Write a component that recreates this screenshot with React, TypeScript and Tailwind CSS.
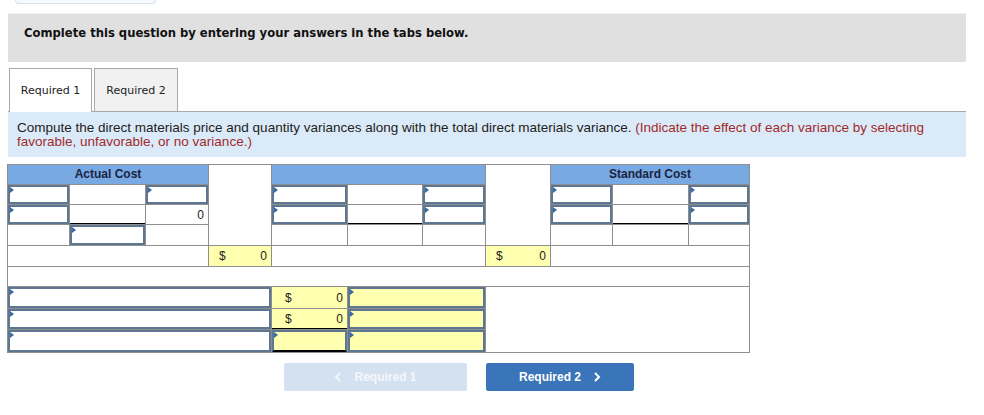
import React from "react";

const Tri = () => (
  <span className="absolute left-0 top-0 h-0 w-0 border-y-[3px] border-l-[4px] border-y-transparent border-l-[#3b6aa6]" />
);

const Inp = ({ yellow = false, extra = "" }: { yellow?: boolean; extra?: string }) => (
  <div className={`relative h-full w-full border-2 border-[#5d7792] ${yellow ? "bg-[#ffffb0]" : "bg-white"} ${extra}`}>
    <Tri />
  </div>
);

const W = ({ cls = "" }: { cls?: string }) => <div className={`bg-white ${cls}`} />;

const Money = ({ cls = "" }: { cls?: string }) => (
  <div className={`flex items-center justify-between bg-[#ffffb0] pr-[4px] text-[12px] text-[#222] ${cls}`}>
    <span>$</span>
    <span>0</span>
  </div>
);

export default function App() {
  return (
    <div className="min-h-[415px] w-[984px] bg-white font-['DejaVu_Sans',sans-serif] text-[#222]">
      <div className="ml-[15px] h-[4px] w-[141px] rounded-b-[4px] border border-t-0 border-[#d9e2ec] bg-[#f7fafd]" />
      <div className="ml-[8px] mt-[9px] h-px w-[958px] bg-[#efefef]" />
      <div className="ml-[8px] flex h-[48px] w-[958px] items-center bg-[#e0e0e0] pb-[9px] pl-[16px]">
        <span className="text-[11.6px] font-bold text-[#111]">Complete this question by entering your answers in the tabs below.</span>
      </div>
      <div className="ml-[8px] mt-[6px] flex w-[958px] items-end border-b border-[#a9a9a9]">
        <div className="ml-px mb-[-1px] flex h-[44px] w-[83px] items-center justify-center border border-b-0 border-[#a9a9a9] bg-white pt-[2px] text-[11px]">
          Required 1
        </div>
        <div className="ml-[2px] flex h-[43px] w-[84px] items-center justify-center border border-b-0 border-[#a9a9a9] bg-[#f1f1f1] pt-[2px] text-[11px]">
          Required 2
        </div>
      </div>
      <div className="ml-[8px] w-[958px] bg-[#dbeaf8] pb-[8px] pl-[9px] pr-[20px] pt-[9px] font-['Liberation_Sans',sans-serif] text-[13.5px] leading-[14px] text-[#222]">
        Compute the direct materials price and quantity variances along with the total direct materials variance.{" "}
        <span className="text-[#a02a2a]">(Indicate the effect of each variance by selecting favorable, unfavorable, or no variance.)</span>
      </div>

      <div className="ml-[7px] mt-[7px] grid w-[743px] grid-cols-[61px_75px_62px_62px_75px_74px_62px_64px_61px_75px_60px] grid-rows-[19px_19px_19px_20px_20px_19px_21px_20px_22px] gap-px bg-[#8e8e8e] p-px font-['Liberation_Sans',sans-serif]">
        {/* header */}
        <div className="col-start-1 col-span-3 row-start-1 flex items-center justify-center bg-[#78a9e3] pb-[1px] text-[12px] font-bold text-[#1c2340]">Actual Cost</div>
        <W cls="col-start-4 row-start-1 row-span-4" />
        <div className="col-start-5 col-span-3 row-start-1 bg-[#78a9e3]" />
        <W cls="col-start-8 row-start-1 row-span-4" />
        <div className="col-start-9 col-span-3 row-start-1 flex items-center justify-center bg-[#78a9e3] pb-[1px] text-[12px] font-bold text-[#1c2340]">Standard Cost</div>

        {/* row 1 */}
        <div className="col-start-1 row-start-2"><Inp /></div>
        <W cls="col-start-2 row-start-2" />
        <div className="col-start-3 row-start-2"><Inp /></div>
        <div className="col-start-5 row-start-2"><Inp /></div>
        <W cls="col-start-6 row-start-2" />
        <div className="col-start-7 row-start-2"><Inp /></div>
        <div className="col-start-9 row-start-2"><Inp /></div>
        <W cls="col-start-10 row-start-2" />
        <div className="col-start-11 row-start-2"><Inp /></div>

        {/* row 2 */}
        <div className="col-start-1 row-start-3"><Inp /></div>
        <W cls="col-start-2 row-start-3 border-b border-black" />
        <div className="col-start-3 row-start-3 flex items-center justify-end bg-white pr-[4px] text-[12px]">0</div>
        <div className="col-start-5 row-start-3"><Inp /></div>
        <W cls="col-start-6 row-start-3 border-b border-black" />
        <div className="col-start-7 row-start-3"><Inp /></div>
        <div className="col-start-9 row-start-3"><Inp /></div>
        <W cls="col-start-10 row-start-3 border-b border-black" />
        <div className="col-start-11 row-start-3"><Inp /></div>

        {/* row 3 */}
        <W cls="col-start-1 row-start-4" />
        <div className="col-start-2 row-start-4"><Inp /></div>
        <W cls="col-start-3 row-start-4" />
        <W cls="col-start-5 row-start-4" />
        <W cls="col-start-6 row-start-4" />
        <W cls="col-start-7 row-start-4" />
        <W cls="col-start-9 row-start-4" />
        <W cls="col-start-10 row-start-4" />
        <W cls="col-start-11 row-start-4" />

        {/* row 4 */}
        <W cls="col-start-1 col-span-3 row-start-5" />
        <Money cls="col-start-4 row-start-5 pl-[10px]" />
        <W cls="col-start-5 col-span-3 row-start-5" />
        <Money cls="col-start-8 row-start-5 pl-[10px]" />
        <W cls="col-start-9 col-span-3 row-start-5" />

        {/* row 5 */}
        <W cls="col-start-1 col-span-11 row-start-6" />

        {/* rows 6-8 */}
        <div className="col-start-1 col-span-4 row-start-7"><Inp /></div>
        <Money cls="col-start-5 row-start-7 pl-[13px]" />
        <div className="col-start-6 col-span-2 row-start-7"><Inp yellow /></div>
        <W cls="col-start-8 col-span-4 row-start-7 row-span-3" />

        <div className="col-start-1 col-span-4 row-start-8"><Inp /></div>
        <Money cls="col-start-5 row-start-8 pl-[13px] border-b border-black" />
        <div className="col-start-6 col-span-2 row-start-8"><Inp yellow /></div>

        <div className="col-start-1 col-span-4 row-start-9"><Inp /></div>
        <div className="col-start-5 row-start-9"><Inp yellow extra="border-b-black" /></div>
        <div className="col-start-6 col-span-2 row-start-9"><Inp yellow /></div>
      </div>

      <div className="ml-[284px] mt-[10px] flex gap-[19px] font-['Liberation_Sans',sans-serif] text-[12px] font-bold">
        <button className="flex h-[28px] w-[183px] items-center justify-center gap-[12px] rounded-[2px] bg-[#d4e1f1] text-[#f4f7fb]">
          <svg width="8" height="10" viewBox="0 0 8 10"><path d="M6 1 L2 5 L6 9" stroke="currentColor" strokeWidth="2" fill="none" /></svg>
          <span>Required 1</span>
        </button>
        <button className="flex h-[28px] w-[148px] items-center justify-center gap-[12px] rounded-[2px] bg-[#3a74b9] text-white">
          <span>Required 2</span>
          <svg width="8" height="10" viewBox="0 0 8 10"><path d="M2 1 L6 5 L2 9" stroke="currentColor" strokeWidth="2" fill="none" /></svg>
        </button>
      </div>
    </div>
  );
}
